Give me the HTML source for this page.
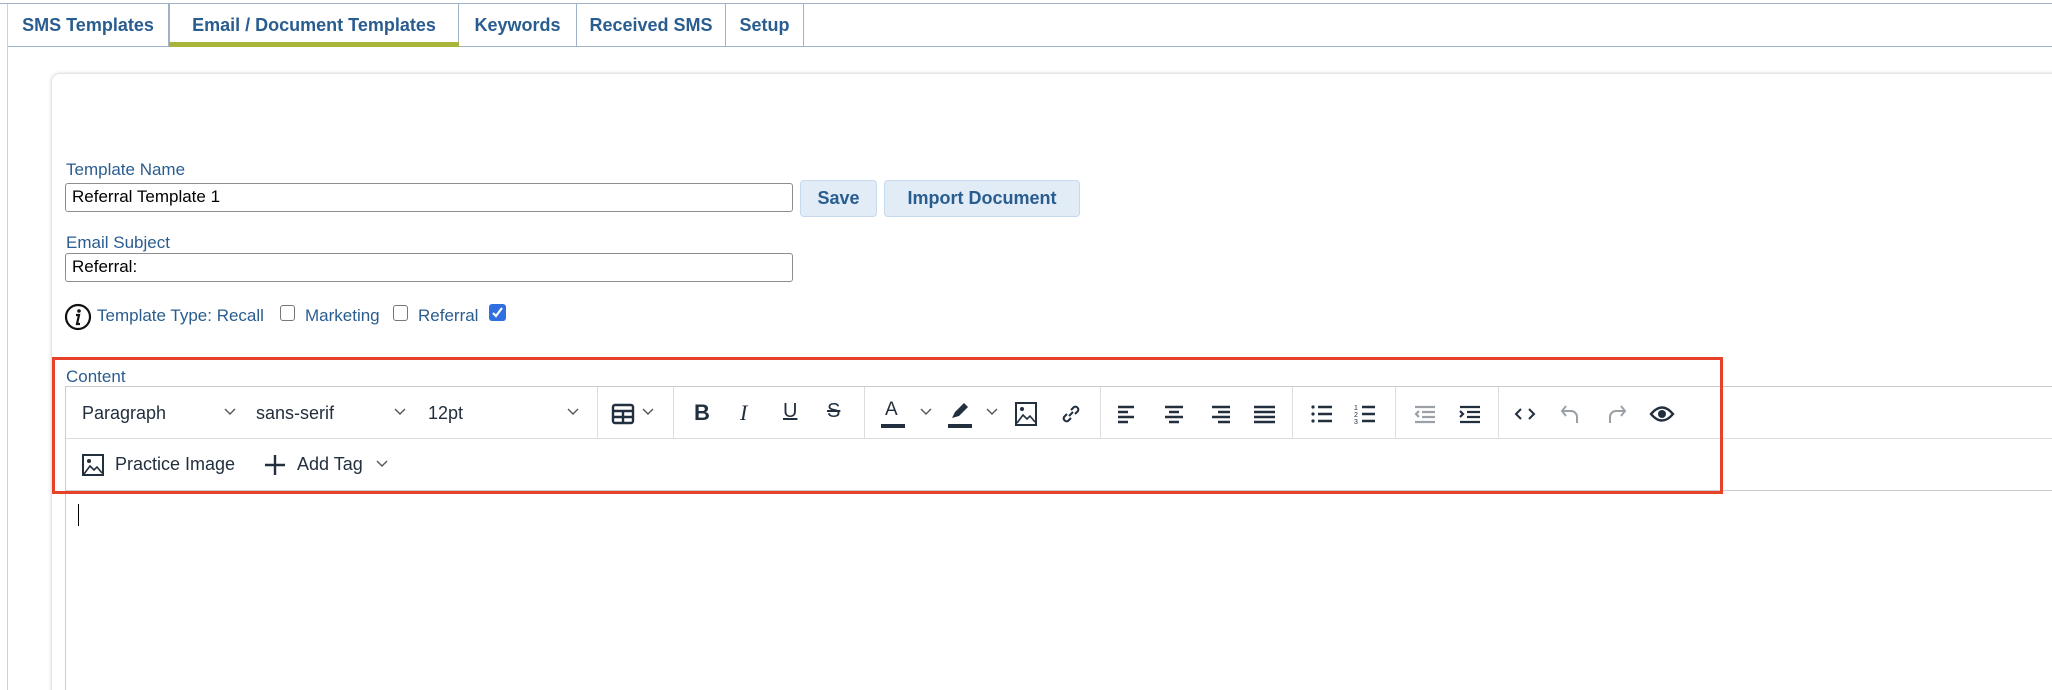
<!DOCTYPE html>
<html style="overflow:hidden;height:690px"><head><meta charset="utf-8"><style>
*{box-sizing:border-box;margin:0;padding:0}
body{width:2052px;height:690px;overflow:hidden;background:#fff;font-family:"Liberation Sans",sans-serif;position:relative}
.a{position:absolute}
.tab{position:absolute;top:4px;height:43px;border-right:1px solid #9fb3c8;color:#2a5d8f;font-weight:bold;font-size:18px;line-height:43px;text-align:center}
.lbl{position:absolute;color:#2a5d8f;font-size:17px}
.inp{position:absolute;border:1px solid #8d8d8d;border-radius:3px;font-size:17px;padding-left:6px;line-height:26px;color:#000}
.btn{position:absolute;background:#e1ecf7;border:1px solid #c7d9ec;border-radius:4px;color:#2a5d8f;font-weight:bold;font-size:18px;text-align:center}
.tb{position:absolute;font-size:18px;color:#222f3e}
.sep{position:absolute;top:387px;width:1px;height:51px;background:#ddd}
.ic{position:absolute;top:402px}
.chev{position:absolute;top:408px}
</style></head><body>
<div class="a" style="left:0;top:3px;width:2052px;height:1px;background:#9fb3c8"></div>
<div class="a" style="left:7px;top:46px;width:2045px;height:1px;background:#9fb3c8"></div>
<div class="a" style="left:7px;top:4px;width:1px;height:686px;background:#c9d3dd"></div>
<div class="tab" style="left:8px;width:161px">SMS Templates</div>
<div class="tab" style="left:169px;width:290px;border-left:1px solid #9fb3c8">Email / Document Templates</div>
<div class="a" style="left:169px;top:42px;width:290px;height:5px;background:#a8b43a"></div>
<div class="tab" style="left:459px;width:118px">Keywords</div>
<div class="tab" style="left:577px;width:149px">Received SMS</div>
<div class="tab" style="left:726px;width:78px">Setup</div>

<div class="a" style="left:52px;top:74px;width:2010px;height:640px;border-radius:8px;box-shadow:0 0 4px rgba(0,0,0,.25);background:#fff"></div>

<div class="lbl" style="left:66px;top:160px">Template Name</div>
<div class="inp" style="left:65px;top:183px;width:728px;height:29px">Referral Template 1</div>
<div class="btn" style="left:800px;top:180px;width:77px;height:37px;line-height:35px">Save</div>
<div class="btn" style="left:884px;top:180px;width:196px;height:37px;line-height:35px">Import Document</div>
<div class="lbl" style="left:66px;top:233px">Email Subject</div>
<div class="inp" style="left:65px;top:253px;width:728px;height:29px">Referral:</div>

<svg class="a" style="left:64px;top:303px" width="28" height="28" viewBox="0 0 28 28"><circle cx="14" cy="14" r="12" fill="none" stroke="#111" stroke-width="2.2"/><circle cx="15" cy="8" r="1.8" fill="#111"/><path d="M12 12h3l-2 9h3" fill="none" stroke="#111" stroke-width="2.2"/></svg>
<div class="lbl" style="left:97px;top:306px">Template Type: Recall</div>
<div class="a" style="left:280px;top:305px;width:15px;height:16px;border:1px solid #777;border-radius:3px"></div>
<div class="lbl" style="left:305px;top:306px">Marketing</div>
<div class="a" style="left:393px;top:305px;width:15px;height:16px;border:1px solid #777;border-radius:3px"></div>
<div class="lbl" style="left:418px;top:306px">Referral</div>
<svg class="a" style="left:489px;top:304px" width="17" height="17"><rect width="17" height="17" rx="3" fill="#2f6fe0"/><path d="M4 9l3 3 6-8" stroke="#fff" stroke-width="2.2" fill="none"/></svg>

<div class="lbl" style="left:66px;top:367px">Content</div>
<div class="a" style="left:65px;top:386px;width:1990px;height:320px;border:1px solid #ccc;border-right:none"></div>
<div class="a" style="left:66px;top:438px;width:1990px;height:1px;background:#ddd"></div>
<div class="a" style="left:66px;top:490px;width:1990px;height:1px;background:#ccc"></div>
<div class="a" style="left:78px;top:504px;width:1px;height:22px;background:#000"></div>

<div class="tb" style="left:82px;top:403px">Paragraph</div>
<div class="tb" style="left:256px;top:403px">sans-serif</div>
<div class="tb" style="left:428px;top:403px">12pt</div>
<svg class="chev" style="left:224px" width="12" height="8"><path d="M1 1l5 5 5-5" stroke="#555" stroke-width="1.4" fill="none"/></svg>
<svg class="chev" style="left:394px" width="12" height="8"><path d="M1 1l5 5 5-5" stroke="#555" stroke-width="1.4" fill="none"/></svg>
<svg class="chev" style="left:567px" width="12" height="8"><path d="M1 1l5 5 5-5" stroke="#555" stroke-width="1.4" fill="none"/></svg>
<div class="sep" style="left:597px"></div>
<svg class="ic" style="left:611px" width="24" height="24"><rect x="2" y="3" width="20" height="18" rx="2" fill="none" stroke="#222f3e" stroke-width="2.4"/><path d="M2 9h20M2 15h20M12 9v12" stroke="#222f3e" stroke-width="2.4"/></svg>
<svg class="chev" style="left:642px" width="12" height="8"><path d="M1 1l5 5 5-5" stroke="#555" stroke-width="1.4" fill="none"/></svg>
<div class="sep" style="left:673px"></div>
<div class="tb" style="left:694px;top:400px;font-weight:bold;font-size:22px">B</div>
<div class="tb" style="left:740px;top:400px;font-style:italic;font-size:22px;font-family:'Liberation Serif',serif">I</div>
<div class="tb" style="left:783px;top:400px;font-size:20px;text-decoration:underline">U</div>
<div class="tb" style="left:827px;top:400px;font-size:20px;text-decoration:line-through">S</div>
<div class="sep" style="left:864px"></div>
<div class="tb" style="left:885px;top:399px;font-size:19px">A</div>
<div class="a" style="left:881px;top:424px;width:24px;height:4px;background:#222f3e"></div>
<svg class="chev" style="left:920px" width="12" height="8"><path d="M1 1l5 5 5-5" stroke="#555" stroke-width="1.4" fill="none"/></svg>
<svg class="a" style="left:948px;top:400px" width="24" height="22"><path d="M4 18l3-6 9-9 4 4-9 9z" fill="#222f3e"/></svg>
<div class="a" style="left:948px;top:424px;width:24px;height:4px;background:#222f3e"></div>
<svg class="chev" style="left:986px" width="12" height="8"><path d="M1 1l5 5 5-5" stroke="#555" stroke-width="1.4" fill="none"/></svg>
<svg class="ic" style="left:1014px" width="24" height="24"><rect x="2" y="1" width="20" height="22" fill="none" stroke="#222f3e" stroke-width="2"/><circle cx="8" cy="7" r="2" fill="#222f3e"/><path d="M3 21l6-8 4 4 3-3 5 6" fill="none" stroke="#222f3e" stroke-width="1.6"/></svg>
<svg class="ic" style="left:1059px" width="24" height="24"><path d="M10 14l4-4M8 12l-3 3a3 3 0 0 0 4 4l3-3M16 12l3-3a3 3 0 0 0-4-4l-3 3" fill="none" stroke="#222f3e" stroke-width="2"/></svg>
<div class="sep" style="left:1100px"></div>
<svg class="ic" style="left:1116px" width="24" height="24"><path d="M2 5h16M2 10h10M2 15h16M2 20h10" stroke="#222f3e" stroke-width="2.4"/></svg>
<svg class="ic" style="left:1162px" width="24" height="24"><path d="M3 5h18M7 10h10M3 15h18M7 20h10" stroke="#222f3e" stroke-width="2.4"/></svg>
<svg class="ic" style="left:1207px" width="24" height="24"><path d="M5 5h18M11 10h12M5 15h18M11 20h12" stroke="#222f3e" stroke-width="2.4"/></svg>
<svg class="ic" style="left:1252px" width="24" height="24"><path d="M2 5h21M2 10h21M2 15h21M2 20h21" stroke="#222f3e" stroke-width="2.4"/></svg>
<div class="sep" style="left:1292px"></div>
<svg class="ic" style="left:1310px" width="24" height="24"><path d="M8 5h14M8 12h14M8 19h14" stroke="#222f3e" stroke-width="2.4"/><circle cx="3" cy="5" r="1.6" fill="#222f3e"/><circle cx="3" cy="12" r="1.6" fill="#222f3e"/><circle cx="3" cy="19" r="1.6" fill="#222f3e"/></svg>
<svg class="ic" style="left:1353px" width="24" height="24"><path d="M9 5h13M9 12h13M9 19h13" stroke="#222f3e" stroke-width="2.4"/><text x="1" y="8" font-size="7" font-family="Liberation Sans" fill="#222f3e">1</text><text x="1" y="15" font-size="7" font-family="Liberation Sans" fill="#222f3e">2</text><text x="1" y="22" font-size="7" font-family="Liberation Sans" fill="#222f3e">3</text></svg>
<div class="sep" style="left:1395px"></div>
<svg class="ic" style="left:1412px" width="24" height="24"><path d="M3 5h20M10 10h13M10 15h13M3 20h20M7 9l-3 3 3 3" stroke="#9aa0a6" stroke-width="2.2" fill="none"/></svg>
<svg class="ic" style="left:1457px" width="24" height="24"><path d="M3 5h20M10 10h13M10 15h13M3 20h20M3 9l3 3-3 3" stroke="#222f3e" stroke-width="2.2" fill="none"/></svg>
<div class="sep" style="left:1498px"></div>
<svg class="ic" style="left:1513px" width="24" height="24"><path d="M8 7l-5 5 5 5M16 7l5 5-5 5" stroke="#222f3e" stroke-width="2" fill="none"/></svg>
<svg class="ic" style="left:1558px" width="24" height="24"><path d="M8 4l-4 5 4 5M4 9h9a6 6 0 0 1 6 6v6" stroke="#9aa0a6" stroke-width="2" fill="none"/></svg>
<svg class="ic" style="left:1605px" width="24" height="24"><path d="M16 4l4 5-4 5M20 9h-9a6 6 0 0 0-6 6v6" stroke="#9aa0a6" stroke-width="2" fill="none"/></svg>
<svg class="ic" style="left:1649px" width="26" height="24"><path d="M2 12q11-13 22 0q-11 13-22 0z" fill="none" stroke="#222f3e" stroke-width="2.4"/><circle cx="13" cy="12" r="4" fill="#222f3e"/></svg>

<svg class="a" style="left:81px;top:453px" width="24" height="24"><rect x="2" y="2" width="20" height="20" fill="none" stroke="#222f3e" stroke-width="2"/><circle cx="8" cy="8" r="2" fill="#222f3e"/><path d="M3 21l6-8 4 4 3-3 5 6" fill="none" stroke="#222f3e" stroke-width="1.6"/></svg>
<div class="tb" style="left:115px;top:454px">Practice Image</div>
<svg class="a" style="left:263px;top:453px" width="24" height="24"><path d="M12 2v20M2 12h20" stroke="#222f3e" stroke-width="2.4"/></svg>
<div class="tb" style="left:297px;top:454px">Add Tag</div>
<svg class="a" style="left:376px;top:460px" width="12" height="8"><path d="M1 1l5 5 5-5" stroke="#555" stroke-width="1.4" fill="none"/></svg>

<div class="a" style="left:52px;top:357px;width:1671px;height:137px;border:3px solid #e8412a"></div>
</body></html>
